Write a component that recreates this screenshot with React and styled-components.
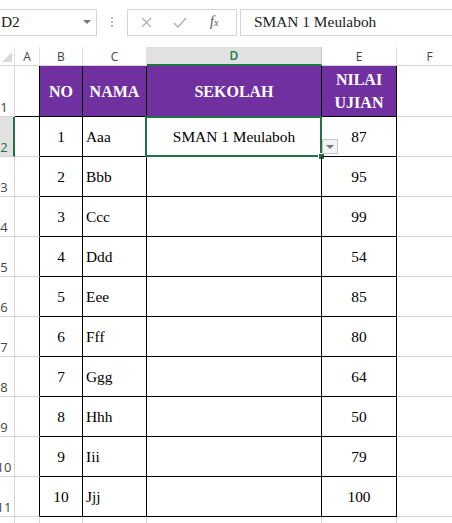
import React from "react";
import styled, { createGlobalStyle } from "styled-components";

const GlobalStyle = createGlobalStyle`
  html, body {
    margin: 0;
    padding: 0;
    background: #ffffff;
    overflow: hidden;
  }
  body {
    font-family: "Liberation Serif", "Times New Roman", serif;
  }
`;

const Page = styled.div`
  width: 452px;
  height: 523px;
  overflow: hidden;
  background: #ffffff;
`;

const FormulaBar = styled.div`
  display: flex;
  align-items: center;
  height: 47px;
  padding-bottom: 3px;
  box-sizing: border-box;
  background: #ffffff;
`;

const NameBox = styled.div`
  display: flex;
  align-items: center;
  justify-content: space-between;
  width: 97px;
  height: 27px;
  box-sizing: border-box;
  border: 1px solid #d4d4d4;
  border-left: none;
  padding: 0 5px 0 1px;
  font-size: 15.4px;
  color: #222;
`;

const Caret = styled.span`
  width: 0;
  height: 0;
  border-left: 4px solid transparent;
  border-right: 4px solid transparent;
  border-top: 4px solid #777;
`;

const Dots = styled.div`
  display: flex;
  flex-direction: column;
  gap: 2px;
  width: 30px;
  align-items: center;

  span {
    width: 2px;
    height: 2px;
    background: #b5b5b5;
  }
`;

const ActionBox = styled.div`
  display: flex;
  align-items: center;
  width: 110px;
  height: 27px;
  box-sizing: border-box;
  border: 1px solid #d4d4d4;
  padding-left: 13px;
  gap: 21px;
  margin-right: 3px;
`;

const FxText = styled.span`
  font-family: "Liberation Serif", serif;
  font-style: italic;
  font-size: 14px;
  color: #555;
  margin-left: 2px;
`;

const FormulaInput = styled.div`
  flex: 1;
  display: flex;
  align-items: center;
  height: 27px;
  box-sizing: border-box;
  border: 1px solid #d4d4d4;
  border-right: none;
  padding-left: 13px;
  font-size: 15.4px;
  color: #222;
`;

const Grid = styled.div`
  display: grid;
  grid-template-columns: 15px 25px 43px 64px 175px 75px 66px;
  grid-template-rows: 19px 51px repeat(11, 40px);
`;

const ColHead = styled.div`
  display: flex;
  align-items: center;
  justify-content: center;
  box-sizing: border-box;
  font-family: "Open Sans", "Noto Sans", sans-serif;
  font-size: 12px;
  color: ${(p) => (p.active ? "#217346" : "#444")};
  font-weight: ${(p) => (p.active ? 600 : 400)};
  background: ${(p) => (p.active ? "#e1e1e1" : "#ffffff")};
  border-right: 1px solid ${(p) => (p.active ? "#c6c6c6" : "#e1e1e1")};
  border-bottom: ${(p) => (p.active ? "2px solid #217346" : "1px solid #d4d4d4")};
  position: relative;
`;

const Corner = styled(ColHead)`
  svg {
    position: absolute;
    right: 2px;
    bottom: 3px;
  }
`;

const RowHead = styled.div`
  display: flex;
  align-items: flex-end;
  justify-content: flex-end;
  overflow: hidden;
  box-sizing: border-box;
  padding-bottom: 0;
  font-family: "Open Sans", "Noto Sans", sans-serif;
  font-size: 13px;
  color: ${(p) => (p.active ? "#217346" : "#444")};
  background: ${(p) => (p.active ? "#e1e1e1" : "#ffffff")};
  border-right: ${(p) => (p.active ? "2px solid #217346" : "1px solid #d4d4d4")};
  border-bottom: 1px solid #d4d4d4;

  span {
    display: block;
    width: 18px;
    margin-right: ${(p) => (p.active ? "0px" : "1px")};
    text-align: center;
    flex-shrink: 0;
  }
`;

const Cell = styled.div`
  position: relative;
  display: flex;
  align-items: center;
  justify-content: ${(p) => (p.left ? "flex-start" : "center")};
  padding-left: ${(p) => (p.left ? "3px" : "0")};
  box-sizing: border-box;
  font-size: 15.4px;
  color: #000;
  border-right: 1px solid ${(p) => (p.edge ? "#000" : "#d4d4d4")};
  border-bottom: 1px solid ${(p) => (p.edge ? "#000" : "#d4d4d4")};
`;

const HeadCell = styled(Cell)`
  background: #7030a0;
  color: #ffffff;
  font-weight: 700;
  font-size: 16px;
  text-align: center;
  line-height: 23px;
  border-right-color: #000;
  border-bottom-color: #000;
`;

const Selection = styled.div`
  position: absolute;
  left: -2px;
  top: -1px;
  right: -1px;
  bottom: -1px;
  border: 2px solid #217346;
  pointer-events: none;
`;

const FillHandle = styled.div`
  position: absolute;
  right: -4px;
  bottom: -4px;
  width: 5px;
  height: 5px;
  background: #217346;
  border: 1px solid #ffffff;
`;

const DropButton = styled.div`
  position: absolute;
  left: calc(100% + 1px);
  bottom: 2px;
  width: 16px;
  height: 15px;
  box-sizing: border-box;
  border: 1px solid #c6c6c6;
  background: #f4f4f4;
  display: flex;
  align-items: center;
  justify-content: center;
  z-index: 2;
`;

const rows = [
  ["1", "Aaa", "87"],
  ["2", "Bbb", "95"],
  ["3", "Ccc", "99"],
  ["4", "Ddd", "54"],
  ["5", "Eee", "85"],
  ["6", "Fff", "80"],
  ["7", "Ggg", "64"],
  ["8", "Hhh", "50"],
  ["9", "Iii", "79"],
  ["10", "Jjj", "100"],
];

export default function App() {
  return (
    <Page>
      <GlobalStyle />
      <FormulaBar>
        <NameBox>
          <span>D2</span>
          <Caret />
        </NameBox>
        <Dots>
          <span />
          <span />
          <span />
        </Dots>
        <ActionBox>
          <svg width="11" height="11" viewBox="0 0 11 11">
            <path d="M1 1 L10 10 M10 1 L1 10" stroke="#b0b0b0" strokeWidth="1.3" fill="none" />
          </svg>
          <svg width="14" height="11" viewBox="0 0 14 11">
            <path d="M1 6 L5 10 L13 1" stroke="#b0b0b0" strokeWidth="1.3" fill="none" />
          </svg>
          <FxText>
            f<sub style={{ fontSize: "10px", verticalAlign: "baseline" }}>x</sub>
          </FxText>
        </ActionBox>
        <FormulaInput>SMAN 1 Meulaboh</FormulaInput>
      </FormulaBar>

      <Grid>
        <Corner>
          <svg width="10" height="10" viewBox="0 0 10 10">
            <path d="M10 0 L10 10 L0 10 Z" fill="#d8d8d8" />
          </svg>
        </Corner>
        <ColHead>A</ColHead>
        <ColHead>B</ColHead>
        <ColHead>C</ColHead>
        <ColHead active>D</ColHead>
        <ColHead>E</ColHead>
        <ColHead>F</ColHead>

        <RowHead>
          <span>1</span>
        </RowHead>
        <Cell edge />
        <HeadCell>NO</HeadCell>
        <HeadCell>NAMA</HeadCell>
        <HeadCell>SEKOLAH</HeadCell>
        <HeadCell>
          NILAI
          <br />
          UJIAN
        </HeadCell>
        <Cell />

        {rows.map(([no, name, score], i) => (
          <React.Fragment key={no}>
            <RowHead active={i === 0}>
              <span>{i + 2}</span>
            </RowHead>
            <Cell edge style={{ borderBottomColor: "#d4d4d4" }} />
            <Cell edge>{no}</Cell>
            <Cell edge left>
              {name}
            </Cell>
            <Cell edge>
              {i === 0 && "SMAN 1 Meulaboh"}
              {i === 0 && (
                <>
                  <Selection />
                  <FillHandle />
                  <DropButton>
                    <Caret />
                  </DropButton>
                </>
              )}
            </Cell>
            <Cell edge>{score}</Cell>
            <Cell />
          </React.Fragment>
        ))}

        <RowHead>
          <span>12</span>
        </RowHead>
        <Cell />
        <Cell />
        <Cell />
        <Cell />
        <Cell />
        <Cell />
      </Grid>
    </Page>
  );
}
